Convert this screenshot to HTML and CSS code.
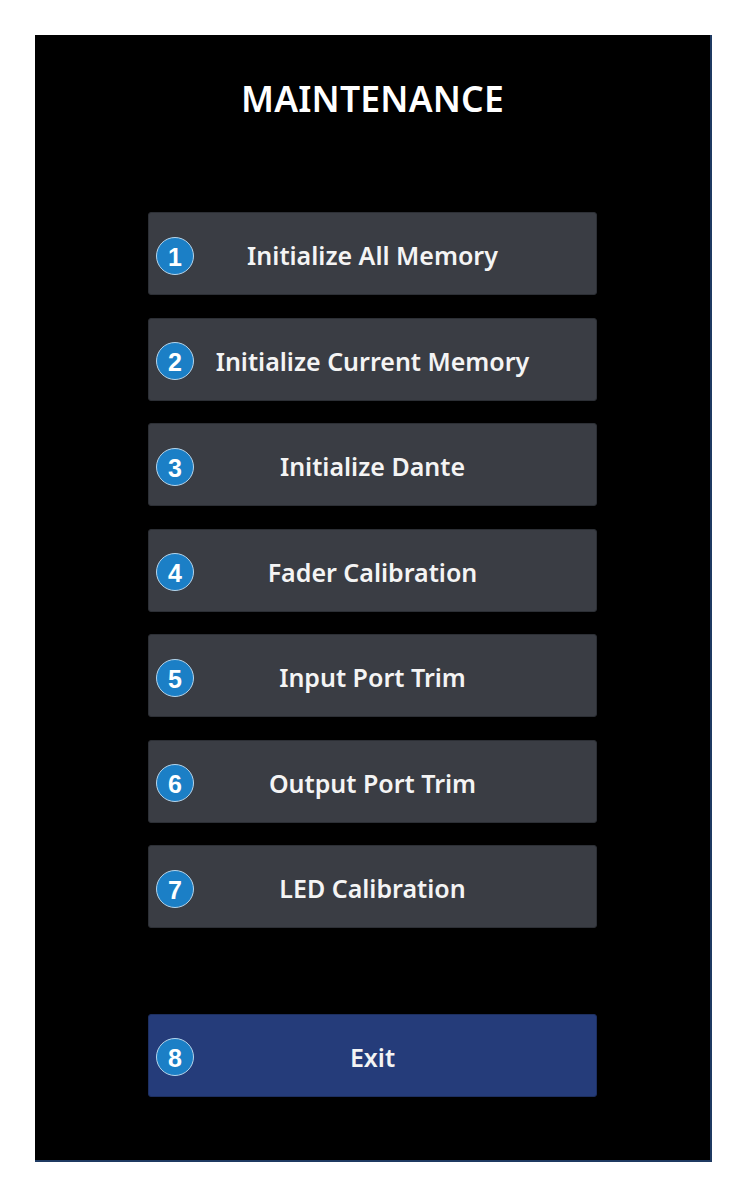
FILE: index.html
```html
<!DOCTYPE html>
<html>
<head>
<meta charset="utf-8">
<link rel="stylesheet" href="styles.css">
</head>
<body>
<div class="panel">
  <h1 class="title">MAINTENANCE</h1>
  <div class="menu">
    <div class="btn"><span class="badge">1</span><span class="label">Initialize All Memory</span></div>
    <div class="btn"><span class="badge">2</span><span class="label">Initialize Current Memory</span></div>
    <div class="btn"><span class="badge">3</span><span class="label">Initialize Dante</span></div>
    <div class="btn"><span class="badge">4</span><span class="label">Fader Calibration</span></div>
    <div class="btn"><span class="badge">5</span><span class="label">Input Port Trim</span></div>
    <div class="btn"><span class="badge">6</span><span class="label">Output Port Trim</span></div>
    <div class="btn"><span class="badge">7</span><span class="label">LED Calibration</span></div>
    <div class="btn exit"><span class="badge">8</span><span class="label">Exit</span></div>
  </div>
</div>
</body>
</html>
```
FILE: styles.css
```css
html, body {
  margin: 0;
  padding: 0;
  background: #ffffff;
}
body {
  padding: 35px 0 0 35px;
}
.panel {
  width: 675px;
  height: 1125px;
  background: #000000;
  border-right: 2px solid #1f3a62;
  border-bottom: 2px solid #1f3a62;
  box-sizing: content-box;
  display: flex;
  flex-direction: column;
  align-items: center;
}
.title {
  margin: 33px 0 0 0;
  height: 60px;
  line-height: 60px;
  font-family: "Noto Sans", sans-serif;
  font-weight: 600;
  font-size: 35.5px;
  color: #ffffff;
  letter-spacing: 0.2px;
}
.menu {
  margin-top: 84px;
  width: 449px;
  display: flex;
  flex-direction: column;
  gap: 22.5px;
}
.btn {
  position: relative;
  height: 83px;
  box-sizing: border-box;
  background: #3a3d44;
  border: 1px solid #2c2f35;
  border-radius: 3px;
  display: flex;
  align-items: center;
  justify-content: center;
}
.btn.exit {
  margin-top: 63px;
  background: #253c7a;
  border-color: #1d2f60;
}
.label {
  font-family: "Noto Sans", sans-serif;
  font-weight: 600;
  font-size: 25px;
  line-height: 34px;
  padding-top: 3px;
  color: #f4f4f4;
}
.badge {
  position: absolute;
  left: 7px;
  top: 50%;
  margin-top: -17px;
  width: 38px;
  height: 38px;
  box-sizing: border-box;
  border-radius: 50%;
  background: #1b7fc6;
  border: 1px solid #b5d5ec;
  color: #ffffff;
  font-family: "Liberation Sans", Arial, sans-serif;
  font-weight: bold;
  font-size: 25px;
  line-height: 38px;
  text-align: center;
}
```
